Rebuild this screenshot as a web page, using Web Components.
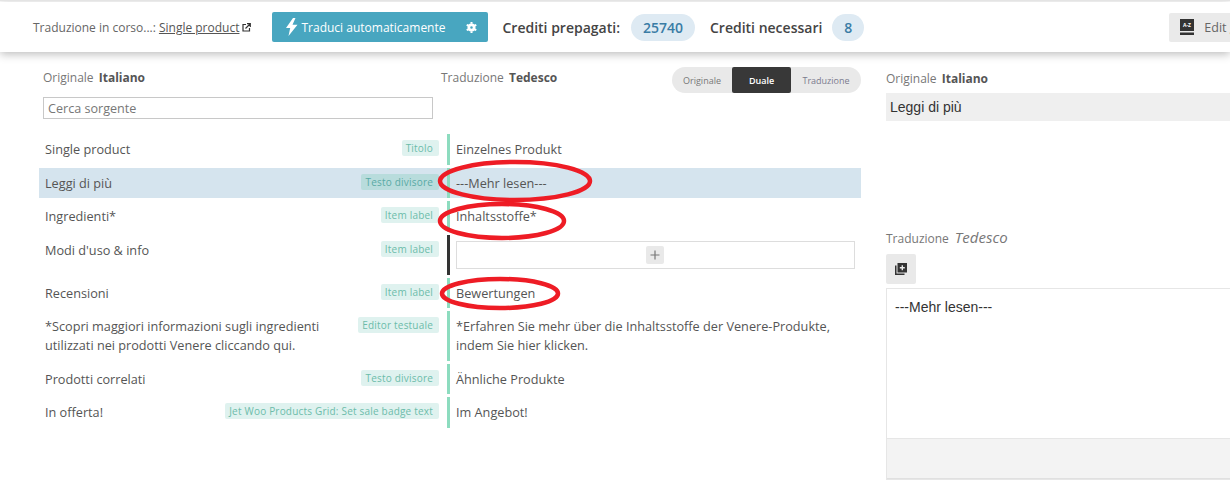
<!DOCTYPE html>
<html lang="it">
<head>
<meta charset="utf-8">
<title>Traduzione</title>
<style>
  html, body { margin: 0; height: 100%; overflow: hidden; background: #fff; }
  body { font-family: "Open Sans", "Liberation Sans", sans-serif; color: #555; }
</style>
</head>
<body>
<tr-app></tr-app>

<script>
// piccolo helper: ogni elemento ha il suo template e shadow root open
function define(name, html) {
  const template = document.createElement('template');
  template.innerHTML = html;
  customElements.define(name, class extends HTMLElement {
    constructor() {
      super();
      this.attachShadow({ mode: 'open' });
      this.shadowRoot.appendChild(template.content.cloneNode(true));
    }
  });
}

define('tr-pill', `
  <style>
    :host { display: inline-flex; flex: none; align-items: center; justify-content: center; height: 27px; border-radius: 14px; background: #deeaf3; color: #3a7ca5; font-weight: 600; font-size: 14px; }
  </style>
  <slot></slot>
`);

define('tr-topbar', `
  <style>
    :host { display: flex; align-items: center; height: 50px; box-sizing: border-box; padding-left: 33px; background: #fff; box-shadow: 0 2px 9px rgba(0,0,0,.28); position: relative; z-index: 2; white-space: nowrap; }
    .status { font-size: 12px; color: #666; display: flex; align-items: center; flex: none; }
    .status a { color: #555; text-decoration: underline; margin-left: 3px; }
    .status svg { margin-left: 3px; }
    .auto { display: flex; align-items: center; flex: none; box-sizing: border-box; width: 216px; height: 30px; margin-left: 21px; padding: 0 11px 0 13px; background: #48a6c0; border-radius: 2px; color: #fff; font-size: 12px; }
    .auto span { margin-left: 3px; flex: 1; }
    .label { font-size: 14px; font-weight: 600; color: #444; flex: none; }
    .l1 { margin-left: 14px; }
    .l2 { margin-left: 15px; }
    .p1 { width: 64px; margin-left: 11px; }
    .p2 { width: 32px; margin-left: 10px; }
    .edit { display: flex; align-items: center; flex: none; height: 29px; margin-left: 305px; padding-left: 11px; width: 90px; background: #eaeaea; border-radius: 2px 0 0 2px; font-size: 12.5px; color: #666; }
    .edit svg { margin-right: 10px; flex: none; }
  </style>
  <div class="status">Traduzione in corso...: <a>Single product</a>
    <svg width="9" height="9" viewBox="0 0 9 9"><path d="M7.5 5v3H1V1.5h3" fill="none" stroke="#333" stroke-width="1.2"/><path d="M3.5 5.5 8 1M5 .7h3.3V4" fill="none" stroke="#333" stroke-width="1.2"/></svg>
  </div>
  <div class="auto">
    <svg width="13" height="18" viewBox="0 0 13 18"><path d="M8 0 1 10h4.200L3.500 18 12.500 6.800H7.500L10.500 0z" fill="#fff"/></svg>
    <span>Traduci automaticamente</span>
    <svg width="11" height="11" viewBox="0 0 12 12"><circle cx="6" cy="6" r="2.900" fill="none" stroke="#fff" stroke-width="3"/><path d="M6 0v2M6 10v2M0.800 3l1.700 1M9.500 8l1.700 1M0.800 9l1.700-1M9.500 4l1.700-1" stroke="#fff" stroke-width="2.200"/></svg>
  </div>
  <div class="label l1">Crediti prepagati:</div><tr-pill class="p1">25740</tr-pill>
  <div class="label l2">Crediti necessari</div><tr-pill class="p2">8</tr-pill>
  <div class="edit">
    <svg width="14" height="16" viewBox="0 0 14 16"><path d="M0 0h14v12H0zM0 13.500h14V16H0z" fill="#333"/><text x="7" y="8" font-size="5" font-weight="700" fill="#fff" text-anchor="middle" font-family="Open Sans, sans-serif">A-Z</text></svg>
    Edit glossary
  </div>
`);

define('tr-head', `
  <style>
    :host { display: block; font-size: 12px; color: #777; }
    b { color: #555; font-weight: 700; margin-left: 2px; }
  </style>
  <slot></slot> <b><slot name="lang"></slot></b>
`);

define('tr-tag', `
  <style>
    :host { display: inline-block; flex: none; height: 16px; line-height: 17px; padding: 0 6px 0 4px; border-radius: 2px; background: #dff2ef; color: #6cbcaa; font-size: 10px; letter-spacing: .2px; white-space: nowrap; }
    :host([on]) { background: #b8dcdc; color: #58aaa5; }
  </style>
  <slot></slot>
`);

define('tr-row', `
  <style>
    :host { display: grid; grid-template-columns: 408px 3px 1fr; align-items: stretch; margin-top: 3px; font-size: 12.7px; line-height: 19px; color: #555; }
    :host([on]) { background: #d5e4ee; }
    .src { display: flex; justify-content: space-between; align-items: flex-start; padding: 6px 8px 0 6px; }
    .src span { flex: 0 1 auto; max-width: 300px; }
    .bar { background: #8ddcbf; }
    :host([empty]) .bar { background: #333; }
    .dst { padding: 6px 6px 5.5px 6px; }
  </style>
  <div class="src"><span><slot name="src"></slot></span><slot name="tag"></slot></div>
  <div class="bar"></div>
  <div class="dst"><slot></slot></div>
`);

define('tr-empty', `
  <style>
    :host { display: flex; align-items: center; justify-content: center; box-sizing: border-box; height: 28px; margin-bottom: .5px; border: 1px solid #ddd; }
    span { display: block; width: 18px; height: 18px; margin-left: -2px; background: #e9e9e9; border-radius: 2px; }
    svg { display: block; margin: 4px; }
  </style>
  <span><svg width="10" height="10" viewBox="0 0 10 10"><path d="M5 .5v9M.5 5h9" stroke="#777" stroke-width="1.200"/></svg></span>
`);

define('tr-switch', `
  <style>
    :host { display: flex; align-items: stretch; height: 26px; border-radius: 13px; background: #e9e9e9; font-size: 9px; color: #777; }
    div { display: flex; align-items: center; justify-content: center; }
    .a { width: 60px; }
    .b { width: 59px; background: #383838; color: #fff; font-weight: 600; border-radius: 2px; }
    .c { width: 70px; color: #7b7b8e; }
  </style>
  <div class="a">Originale</div><div class="b">Duale</div><div class="c">Traduzione</div>
`);

define('tr-marks', `
  <style>
    :host { position: absolute; left: 0; top: -1px; pointer-events: none; z-index: 3; }
    svg { display: block; }
    ellipse { fill: none; stroke: #ee1c25; stroke-width: 4.500; }
  </style>
  <svg width="600" height="320" viewBox="0 0 600 320">
    <ellipse cx="515" cy="181" rx="75" ry="19"/>
    <ellipse cx="502" cy="221" rx="62" ry="17"/>
    <ellipse cx="500" cy="293.500" rx="58" ry="14.500"/>
  </svg>
`);

define('tr-editor', `
  <style>
    :host { display: block; width: 344px; flex: none; padding-top: 18px; font-size: 12px; color: #777; }
    .src { margin-top: 6px; height: 28px; padding-left: 4px; background: #efefef; font: 14px/28px "Liberation Sans", sans-serif; color: #333; }
    .trad { margin-top: 106px; display: flex; align-items: baseline; font-size: 12px; }
    .trad i { font-size: 15px; color: #777; margin-left: 6px; }
    .copy { width: 30px; height: 30px; margin-top: 7px; background: #e9e9e9; border-radius: 2px; display: flex; align-items: center; justify-content: center; }
    .box { margin-top: 4px; box-sizing: border-box; height: 192px; border: 1px solid #e6e6e6; border-right: 0; display: flex; flex-direction: column; }
    .txt { flex: 1; padding: 8px; font: 14px/20px "Liberation Sans", sans-serif; color: #333; }
    .foot { height: 41px; background: #f3f3f3; border-top: 1px solid #e6e6e6; border-bottom: 1px solid #e0e0e0; box-sizing: border-box; }
  </style>
  <tr-head>Originale<span slot="lang">Italiano</span></tr-head>
  <div class="src">Leggi di più</div>
  <div class="trad">Traduzione <i>Tedesco</i></div>
  <div class="copy">
    <svg width="12" height="12" viewBox="0 0 12 12"><path d="M0 2.500h1.500V10.500H9.500V12H0z" fill="#333"/><path fill-rule="evenodd" d="M2.500 0H12v9.500H2.500zM6.600 2.200v1.800H4.800v1.400h1.800v1.800H8V5.400h1.800V4H8V2.200z" fill="#333"/></svg>
  </div>
  <div class="box"><div class="txt">---Mehr lesen---</div><div class="foot"></div></div>
`);

define('tr-app', `
  <style>
    :host { display: block; height: 490px; overflow: hidden; border-top: 1px solid #e4e4e4; box-sizing: border-box; position: relative; }
    tr-topbar { margin-top: 1px; }
    .main { display: flex; padding-left: 39px; gap: 25px; }
    .list { width: 822px; flex: none; }
    .heads { display: grid; grid-template-columns: 398px 1fr auto; height: 65px; padding: 17px 0 0 4px; box-sizing: border-box; position: relative; }
    .search { position: absolute; left: 4px; top: 45px; box-sizing: border-box; width: 390px; height: 22px; border: 1px solid #c8c8c8; padding: 0 4px; font-size: 12.6px; line-height: 21px; color: #777; }
    tr-switch { margin-top: -2px; }
    .rows { margin-top: 17px; }
    .rows tr-row:first-child { margin-top: 0; }
  </style>
  <tr-topbar></tr-topbar>
  <div class="main">
    <div class="list">
      <div class="heads">
        <tr-head>Originale<span slot="lang">Italiano</span></tr-head>
        <tr-head>Traduzione<span slot="lang">Tedesco</span></tr-head>
        <tr-switch></tr-switch>
        <div class="search">Cerca sorgente</div>
      </div>
      <div class="rows">
        <tr-row><span slot="src">Single product</span><tr-tag slot="tag">Titolo</tr-tag>Einzelnes Produkt</tr-row>
        <tr-row on><span slot="src">Leggi di più</span><tr-tag slot="tag" on>Testo divisore</tr-tag>---Mehr lesen---</tr-row>
        <tr-row><span slot="src">Ingredienti*</span><tr-tag slot="tag">Item label</tr-tag>Inhaltsstoffe*</tr-row>
        <tr-row empty><span slot="src">Modi d'uso &amp; info</span><tr-tag slot="tag">Item label</tr-tag><tr-empty></tr-empty></tr-row>
        <tr-row><span slot="src">Recensioni</span><tr-tag slot="tag">Item label</tr-tag>Bewertungen</tr-row>
        <tr-row><span slot="src">*Scopri maggiori informazioni sugli ingredienti utilizzati nei prodotti Venere cliccando qui.</span><tr-tag slot="tag">Editor testuale</tr-tag>*Erfahren Sie mehr über die Inhaltsstoffe der Venere-Produkte, indem Sie hier klicken.</tr-row>
        <tr-row><span slot="src">Prodotti correlati</span><tr-tag slot="tag">Testo divisore</tr-tag>Ähnliche Produkte</tr-row>
        <tr-row><span slot="src">In offerta!</span><tr-tag slot="tag">Jet Woo Products Grid: Set sale badge text</tr-tag>Im Angebot!</tr-row>
      </div>
    </div>
    <tr-editor></tr-editor>
  </div>
  <tr-marks></tr-marks>
`);
</script>
</body>
</html>
